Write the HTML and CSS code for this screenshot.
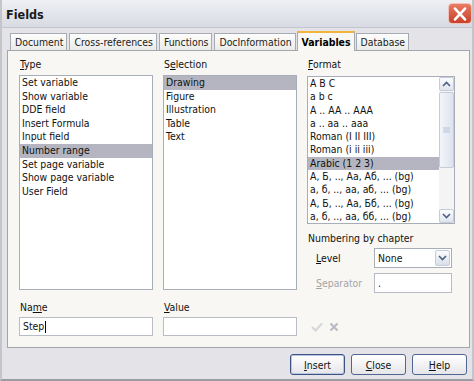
FILE: index.html
```html
<!DOCTYPE html>
<html>
<head>
    <meta charset="UTF-8">
    <title>Fields</title>
    <link rel="stylesheet" href="styles.css">
</head>
<body>
    <div class="window">
        <div class="titlebar">
            <span class="title">Fields</span>
            <div class="close-btn">
                <svg width="20" height="18" viewBox="0 0 24 21">
                    <path d="M6 4 L18 17 M18 4 L6 17" stroke="#fff" stroke-width="3.2" stroke-linecap="round"/>
                </svg>
            </div>
        </div>

        <div class="tabs">
            <div class="tab">Document</div>
            <div class="tab">Cross-references</div>
            <div class="tab">Functions</div>
            <div class="tab">DocInformation</div>
            <div class="tab active">Variables</div>
            <div class="tab">Database</div>
        </div>

        <div class="panel">
            <div class="columns">
                <div class="col col-list">
                    <div class="label"><u>T</u>ype</div>
                    <ul class="listbox tall">
                        <li>Set variable</li>
                        <li>Show variable</li>
                        <li>DDE field</li>
                        <li>Insert Formula</li>
                        <li>Input field</li>
                        <li class="selected">Number range</li>
                        <li>Set page variable</li>
                        <li>Show page variable</li>
                        <li>User Field</li>
                    </ul>
                </div>
                <div class="col col-list">
                    <div class="label">S<u>e</u>lection</div>
                    <ul class="listbox tall">
                        <li class="selected">Drawing</li>
                        <li>Figure</li>
                        <li>Illustration</li>
                        <li>Table</li>
                        <li>Text</li>
                    </ul>
                </div>
                <div class="col col-format">
                    <div class="label"><u>F</u>ormat</div>
                    <div class="listbox format">
                        <ul class="format-items">
                            <li>A B C</li>
                            <li>a b c</li>
                            <li>A .. AA .. AAA</li>
                            <li>a .. aa .. aaa</li>
                            <li>Roman (I II III)</li>
                            <li>Roman (i ii iii)</li>
                            <li class="selected">Arabic (1 2 3)</li>
                            <li>А, Б, .., Аа, Аб, ... (bg)</li>
                            <li>а, б, .., аа, аб, ... (bg)</li>
                            <li>А, Б, .., Аа, Бб, ... (bg)</li>
                            <li>а, б, .., аа, бб, ... (bg)</li>
                        </ul>
                        <div class="scrollbar">
                            <div class="sb-btn">
                                <svg width="9" height="6" viewBox="0 0 9 6"><path d="M1 5 L4.5 1.5 L8 5" fill="none" stroke="#4d6185" stroke-width="1.6"/></svg>
                            </div>
                            <div class="sb-track">
                                <div class="sb-thumb">
                                    <svg width="7" height="7" viewBox="0 0 7 7"><path d="M0 1h7M0 3h7M0 5h7" stroke="#b9c3d6" stroke-width="1"/></svg>
                                </div>
                            </div>
                            <div class="sb-btn">
                                <svg width="9" height="6" viewBox="0 0 9 6"><path d="M1 1 L4.5 4.5 L8 1" fill="none" stroke="#4d6185" stroke-width="1.6"/></svg>
                            </div>
                        </div>
                    </div>
                    <div class="label chapter">Numbering by chapter</div>
                    <div class="field-row">
                        <span class="field-label"><u>L</u>evel</span>
                        <div class="select">
                            <span>None</span>
                            <span class="select-btn">
                                <svg width="9" height="6" viewBox="0 0 9 6"><path d="M1 1 L4.5 4.5 L8 1" fill="none" stroke="#4d6185" stroke-width="1.6"/></svg>
                            </span>
                        </div>
                    </div>
                    <div class="field-row disabled">
                        <span class="field-label"><u>S</u>eparator</span>
                        <div class="input">.</div>
                    </div>
                </div>
            </div>

            <div class="columns bottom">
                <div class="col col-list">
                    <div class="label">Na<u>m</u>e</div>
                    <div class="input">Step<span class="caret"></span></div>
                </div>
                <div class="col col-list">
                    <div class="label"><u>V</u>alue</div>
                    <div class="input"></div>
                </div>
                <div class="col col-format value-icons">
                    <svg width="12" height="10" viewBox="0 0 12 10"><path d="M1 5 L4.5 8.5 L11 1.5" fill="none" stroke="#d4d6da" stroke-width="2"/></svg>
                    <svg width="10" height="10" viewBox="0 0 10 10"><path d="M1.5 1.5 L8.5 8.5 M8.5 1.5 L1.5 8.5" stroke="#b8bcc4" stroke-width="2.2"/></svg>
                </div>
            </div>
        </div>

        <div class="buttons">
            <button class="btn default"><u>I</u>nsert</button>
            <button class="btn"><u>C</u>lose</button>
            <button class="btn"><u>H</u>elp</button>
        </div>
    </div>
</body>
</html>
```

FILE: styles.css
```css
body {
    margin: 0;
    padding: 0;
    background: #fff;
    font-family: Tahoma, "DejaVu Sans Condensed", "Liberation Sans", sans-serif;
    font-size: 10.4px;
    color: #111;
}
u {
    text-decoration: underline;
    text-underline-offset: 1px;
}
.window {
    width: 470px;
    height: 379px;
    background: #e4e4e8;
    border-left: 2px solid #c4c5cb;
    border-right: 2px solid #c4c5cb;
    border-bottom: 2px solid #9a9ca3;
    display: flex;
    flex-direction: column;
}
.titlebar {
    height: 27px;
    flex-shrink: 0;
    display: flex;
    align-items: center;
    justify-content: space-between;
    padding: 0 0 0 4px;
    background: linear-gradient(#eef0f4, #d8dbe3);
    border-bottom: 1px solid #c2c5cd;
}
.title {
    font-weight: bold;
    font-size: 12.5px;
    color: #1a1a1a;
    padding-top: 2px;
}
.close-btn {
    width: 22px;
    height: 19px;
    border: 1px solid #f2c2b8;
    border-radius: 4px;
    background: linear-gradient(#ea7a62, #c8412c);
    display: flex;
    align-items: center;
    justify-content: center;
}
.tabs {
    display: flex;
    align-items: flex-end;
    height: 22px;
    flex-shrink: 0;
    padding-left: 8px;
}
.tab {
    height: 16px;
    line-height: 16px;
    padding: 0 3px 0 4px;
    margin-right: 2px;
    border: 1px solid #a6abb3;
    border-bottom: none;
    background: linear-gradient(#fdfdfd, #ebebe6);
    color: #222;
    white-space: nowrap;
}
.tab.active {
    height: 18px;
    line-height: 18px;
    font-weight: bold;
    background: #f8f7f3;
    border-top: 2px solid #f3b43f;
    margin: 0 1px -1px -1px;
    position: relative;
    color: #000;
}
.panel {
    margin: 0 2px 0 5px;
    height: 279px;
    flex-shrink: 0;
    background: #f8f7f3;
    border: 1px solid #a0a5ae;
    padding: 7px 13px 10px 11px;
    display: flex;
    flex-direction: column;
}
.columns {
    display: flex;
    gap: 10px;
}
.columns.bottom {
    margin-top: 8px;
}
.columns.bottom .label {
    margin-bottom: 3px;
}
.col-list {
    width: 134px;
    display: flex;
    flex-direction: column;
}
.col-format {
    width: 148px;
    display: flex;
    flex-direction: column;
}
.label {
    height: 13px;
    line-height: 13px;
    margin-bottom: 4px;
    padding-left: 1px;
}
.listbox {
    margin: 0;
    padding: 0;
    list-style: none;
    background: #fff;
    border: 1px solid #a7aeb8;
    box-sizing: border-box;
}
.listbox.tall {
    height: 215px;
}
.listbox li,
.format-items li {
    height: 13.6px;
    line-height: 13.6px;
    padding-left: 2px;
    white-space: nowrap;
}
.listbox li.selected,
.format-items li.selected {
    background: #b4b5c0;
}
.listbox.format {
    height: 148px;
    margin-top: 1px;
    display: flex;
}
.format-items {
    flex: 1;
    margin: 0;
    padding: 0;
    list-style: none;
    overflow: hidden;
}
.format-items li {
    height: 13.3px;
    line-height: 13.3px;
}
.scrollbar {
    width: 15px;
    display: flex;
    flex-direction: column;
    background: #f4f4f5;
}
.sb-btn {
    height: 14px;
    border: 1px solid #c5cbd8;
    border-radius: 2px;
    background: linear-gradient(#fbfcfe, #dfe4ee);
    display: flex;
    align-items: center;
    justify-content: center;
    box-sizing: border-box;
}
.sb-track {
    flex: 1;
    padding: 1px 0;
}
.sb-thumb {
    height: 76px;
    border: 1px solid #c5cbd8;
    border-radius: 2px;
    background: linear-gradient(90deg, #f3f5fa, #dde3ee);
    display: flex;
    align-items: center;
    justify-content: center;
    box-sizing: border-box;
}
.label.chapter {
    margin-top: 8px;
    margin-bottom: 3px;
}
.field-row {
    display: flex;
    align-items: center;
    padding-left: 9px;
    height: 20px;
    margin-bottom: 5px;
}
.field-row:last-child {
    margin-bottom: 0;
}
.field-label {
    width: 58px;
}
.field-row.disabled .field-label {
    color: #a4a4a8;
}
.select {
    width: 78px;
    height: 20px;
    box-sizing: border-box;
    border: 1px solid #a7aeb8;
    background: #fff;
    display: flex;
    align-items: center;
    justify-content: space-between;
    padding-left: 3px;
}
.select-btn {
    width: 15px;
    height: 16px;
    margin-right: 1px;
    border: 1px solid #c5cbd8;
    border-radius: 2px;
    background: linear-gradient(#fbfcfe, #d9dfea);
    box-sizing: border-box;
    display: flex;
    align-items: center;
    justify-content: center;
}
.field-row .input {
    width: 78px;
    height: 20px;
}
.input {
    height: 19px;
    box-sizing: border-box;
    border: 1px solid #b8bdc5;
    background: #fff;
    line-height: 17px;
    padding-left: 3px;
    display: flex;
    align-items: center;
}
.caret {
    display: inline-block;
    width: 1px;
    height: 12px;
    background: #000;
    margin-left: 1px;
}
.value-icons {
    flex-direction: row;
    align-items: center;
    gap: 6px;
    padding: 17px 0 0 4px;
    box-sizing: border-box;
}
.buttons {
    display: flex;
    justify-content: flex-end;
    gap: 6px;
    padding: 6px 5px 0 0;
}
.btn {
    width: 55px;
    height: 21px;
    font-family: inherit;
    font-size: 10.4px;
    color: #111;
    border: 1px solid #4f6592;
    border-radius: 3px;
    background: linear-gradient(#ffffff, #e6e6ea);
    padding: 0;
}
.btn.default {
    border-color: #3d5383;
    box-shadow: inset 0 0 0 1px #b9c7e4;
}
```
